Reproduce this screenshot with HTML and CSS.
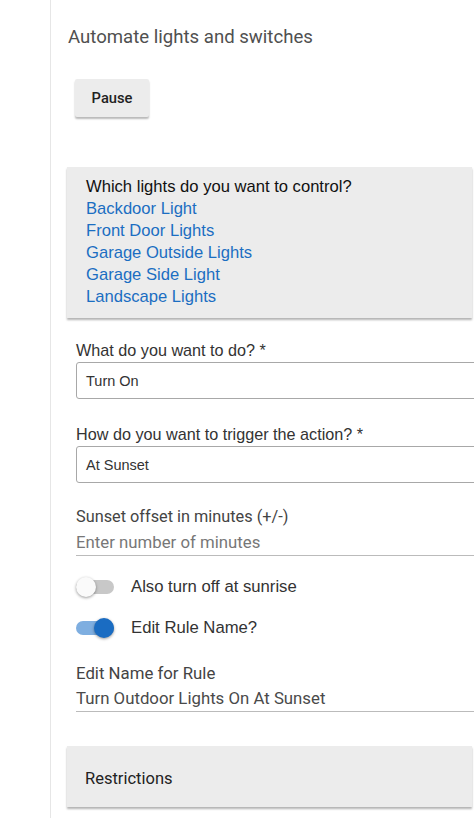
FILE: index.html
```html
<!DOCTYPE html>
<html lang="en">
<head>
    <meta charset="UTF-8">
    <meta name="viewport" content="width=device-width, initial-scale=1.0">
    <title>Automate lights and switches</title>
    <link rel="stylesheet" href="styles.css">
</head>
<body>

<div class="layout">
    <aside class="rail"></aside>

    <main class="content">
        <h1 class="page-title">Automate lights and switches</h1>

        <button class="btn-pause">Pause</button>

        <div class="panel">
            <div class="panel-label">Which lights do you want to control?</div>
            <a href="#" class="device">Backdoor Light</a>
            <a href="#" class="device">Front Door Lights</a>
            <a href="#" class="device">Garage Outside Lights</a>
            <a href="#" class="device">Garage Side Light</a>
            <a href="#" class="device">Landscape Lights</a>
        </div>

        <div class="field field-first">
            <label class="field-label">What do you want to do? *</label>
            <div class="select-box">Turn On</div>
        </div>

        <div class="field field-next">
            <label class="field-label">How do you want to trigger the action? *</label>
            <div class="select-box">At Sunset</div>
        </div>

        <div class="text-field text-offset">
            <label class="text-label">Sunset offset in minutes (+/-)</label>
            <div class="text-value placeholder">Enter number of minutes</div>
        </div>

        <div class="switch-row switch-first">
            <span class="switch"><span class="knob"></span></span>
            <span class="switch-label">Also turn off at sunrise</span>
        </div>

        <div class="switch-row switch-next">
            <span class="switch on"><span class="knob"></span></span>
            <span class="switch-label">Edit Rule Name?</span>
        </div>

        <div class="text-field text-name">
            <label class="text-label">Edit Name for Rule</label>
            <div class="text-value">Turn Outdoor Lights On At Sunset</div>
        </div>

        <div class="panel panel-restrict">Restrictions</div>
    </main>
</div>

</body>
</html>
```

FILE: styles.css
```css
/* Global Styles */
* {
    margin: 0;
    padding: 0;
    box-sizing: border-box;
}

body {
    font-family: 'Roboto', 'Liberation Sans', sans-serif;
    background: #fff;
    overflow: hidden;
}

.layout {
    display: flex;
    min-height: 818px;
}

.rail {
    width: 51px;
    flex-shrink: 0;
    border-right: 1px solid #e6e6e6;
}

.content {
    flex: 1;
    padding: 0 2px 0 16px;
    min-width: 0;
}

.page-title {
    margin: 25px 0 0 1px;
    font-size: 18.6px;
    line-height: 24px;
    font-weight: 400;
    color: #505050;
}

.btn-pause {
    display: block;
    margin: 30px 0 0 8px;
    width: 74px;
    height: 38px;
    border: none;
    border-radius: 2px;
    background: #ececec;
    box-shadow: 0 2px 2px rgba(0, 0, 0, 0.28);
    font-family: 'Roboto', sans-serif;
    font-size: 14.7px;
    font-weight: 500;
    color: #222;
}

/* Grey panels */
.panel {
    margin-top: 50px;
    padding: 9px 19px 10px;
    background: #ececec;
    box-shadow: 0 2px 2px rgba(0, 0, 0, 0.3);
    font-family: 'Liberation Sans', Arial, sans-serif;
    font-size: 16.6px;
    line-height: 22px;
}

.panel-label {
    color: #111;
}

.device {
    display: block;
    color: #1b6ec2;
    text-decoration: none;
}

.panel-restrict {
    margin-top: 34px;
    padding: 23px 18px 18px;
    line-height: 20px;
    font-family: 'Roboto', sans-serif;
    font-size: 16.5px;
    color: #222;
}

/* Select fields */
.field {
    margin-left: 9px;
    margin-right: -6px;
}

.field-first {
    margin-top: 22px;
}

.field-next {
    margin-top: 25px;
}

.field-label {
    display: block;
    font-family: 'Liberation Sans', Arial, sans-serif;
    font-size: 16.2px;
    line-height: 20px;
    color: #333;
    margin-bottom: 2px;
}

.select-box {
    height: 37px;
    border: 1px solid #a8a8a8;
    border-radius: 3px;
    padding: 0 9px;
    display: flex;
    align-items: center;
    font-family: 'Liberation Sans', Arial, sans-serif;
    font-size: 14.5px;
    color: #333;
}

/* Text fields */
.text-field {
    margin-left: 9px;
    margin-right: -6px;
    font-size: 16.8px;
    line-height: 20px;
}

.text-offset {
    margin-top: 24px;
}

.text-name {
    margin-top: 23px;
}

.text-label {
    display: block;
    color: #444;
}

.text-offset .text-label {
    font-size: 16.3px;
}

.text-value {
    margin-top: 5px;
    padding-bottom: 3px;
    border-bottom: 1px solid #bbb;
    color: #4a4a4a;
}

.text-value.placeholder {
    color: #777;
}

/* Switches */
.switch-row {
    margin-left: 9px;
    height: 24px;
    display: flex;
    align-items: center;
    gap: 17px;
}

.switch-first {
    margin-top: 19px;
}

.switch-next {
    margin-top: 17px;
}

.switch {
    position: relative;
    width: 38px;
    height: 14px;
    border-radius: 7px;
    background: #c8c8c8;
}

.knob {
    position: absolute;
    top: -3px;
    left: 0;
    width: 20px;
    height: 20px;
    border-radius: 50%;
    background: #fafafa;
    box-shadow: 0 1px 3px rgba(0, 0, 0, 0.4);
}

.switch.on {
    background: #7eaee0;
}

.switch.on .knob {
    left: 18px;
    background: #1a6cc2;
}

.switch-label {
    font-family: 'Liberation Sans', Arial, sans-serif;
    font-size: 16.7px;
    color: #333;
}
```
